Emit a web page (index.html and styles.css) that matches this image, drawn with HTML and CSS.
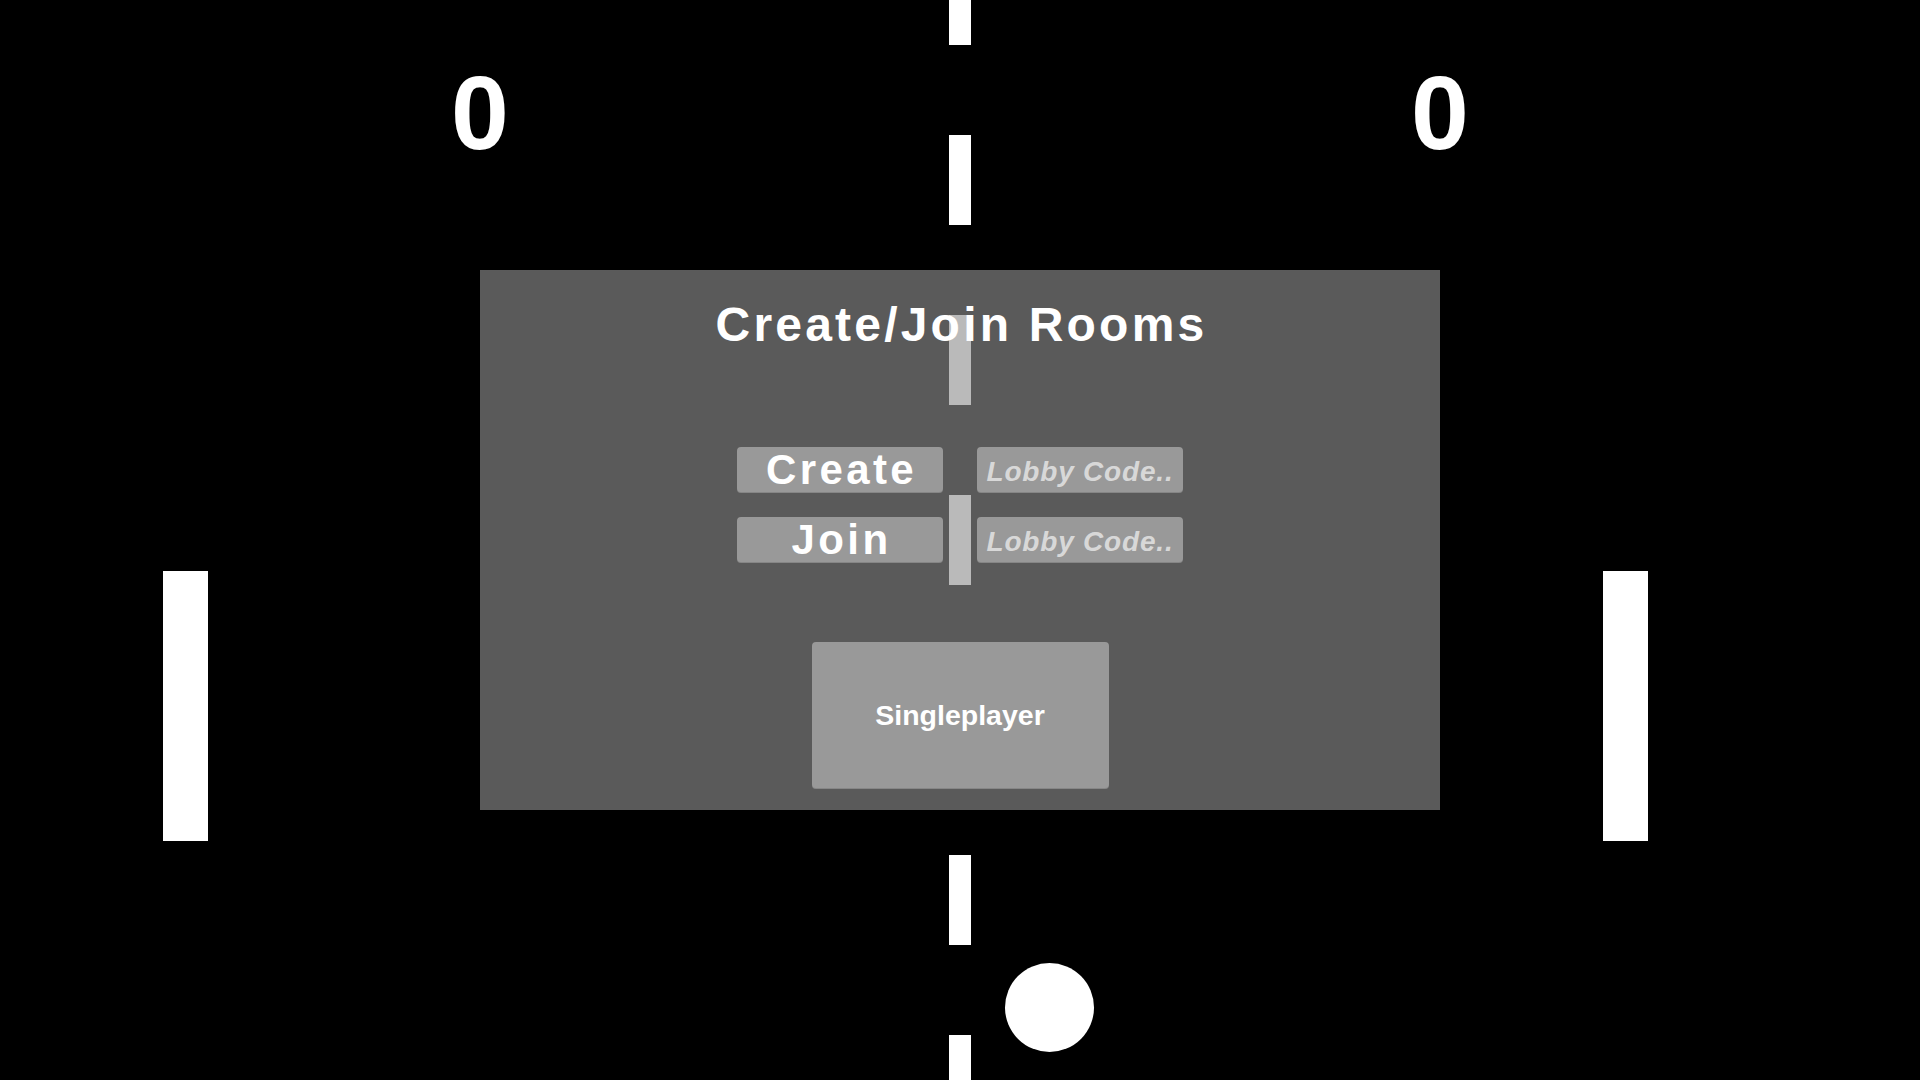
FILE: index.html
```html
<!DOCTYPE html>
<html lang="en">
<head>
<meta charset="utf-8">
<title>Pong</title>
<link rel="stylesheet" href="styles.css">
</head>
<body>
<div class="field">
  <div class="net"></div>
  <div class="score score-left">0</div>
  <div class="score score-right">0</div>
  <div class="paddle paddle-left"></div>
  <div class="paddle paddle-right"></div>
  <div class="ball"></div>

  <div class="menu">
    <h1 class="menu-title">Create/Join Rooms</h1>
    <div class="room-grid">
      <button class="room-btn">Create</button>
      <input class="lobby-input" type="text" placeholder="Lobby Code..">
      <button class="room-btn">Join</button>
      <input class="lobby-input" type="text" placeholder="Lobby Code..">
    </div>
    <button class="single-btn">Singleplayer</button>
  </div>
</div>
</body>
</html>
```

FILE: styles.css
```css
html, body {
  margin: 0;
  padding: 0;
  background: #000;
  overflow: hidden;
}

.field {
  position: relative;
  width: 1920px;
  height: 1080px;
  background: #000;
  overflow: hidden;
  font-family: "Liberation Sans", Arial, sans-serif;
}

.net {
  position: absolute;
  left: 949px;
  top: -45px;
  width: 22px;
  height: 1170px;
  background: repeating-linear-gradient(to bottom, #fff 0 90px, transparent 90px 180px);
}

.score {
  position: absolute;
  top: 61px;
  width: 200px;
  color: #fff;
  font-size: 104px;
  font-weight: bold;
  line-height: 1;
  text-align: center;
}

.score-left { left: 380px; }
.score-right { left: 1340px; }

.paddle {
  position: absolute;
  top: 571px;
  width: 45px;
  height: 270px;
  background: #fff;
}

.paddle-left { left: 163px; }
.paddle-right { left: 1603px; }

.ball {
  position: absolute;
  left: 1005px;
  top: 963px;
  width: 89px;
  height: 89px;
  border-radius: 50%;
  background: #fff;
}

.menu {
  position: absolute;
  left: 480px;
  top: 270px;
  width: 960px;
  height: 540px;
  box-sizing: border-box;
  padding-top: 31px;
  background: rgba(144, 144, 144, 0.625);
  display: flex;
  flex-direction: column;
  align-items: center;
}

.menu-title {
  margin: 0;
  padding-left: 3px;
  color: #fff;
  font-size: 48px;
  font-weight: bold;
  line-height: 1;
  letter-spacing: 3.2px;
}

.room-grid {
  margin-top: 98px;
  display: grid;
  grid-template-columns: 206px 206px;
  grid-auto-rows: 46px;
  column-gap: 34px;
  row-gap: 24px;
}

.room-btn,
.lobby-input,
.single-btn {
  margin: 0;
  border: none;
  border-radius: 4px;
  background: #999999;
  box-shadow: inset 0 -1px 0 rgba(0, 0, 0, 0.12);
  font-family: "Liberation Sans", Arial, sans-serif;
  font-weight: bold;
  color: #fff;
  padding: 0;
  outline: none;
}

.room-btn {
  width: 206px;
  height: 46px;
  font-size: 42px;
  line-height: 46px;
  letter-spacing: 3.4px;
  padding-left: 3px;
  text-align: center;
}

.lobby-input {
  width: 206px;
  height: 46px;
  box-sizing: border-box;
  padding-top: 3px;
  font-size: 28px;
  font-style: italic;
  letter-spacing: 0.8px;
  text-align: center;
  color: #d8d8d8;
}

.lobby-input::placeholder {
  color: #d8d8d8;
  opacity: 1;
}

.single-btn {
  margin-top: 79px;
  width: 297px;
  height: 147px;
  font-size: 28.5px;
  text-align: center;
}
```
